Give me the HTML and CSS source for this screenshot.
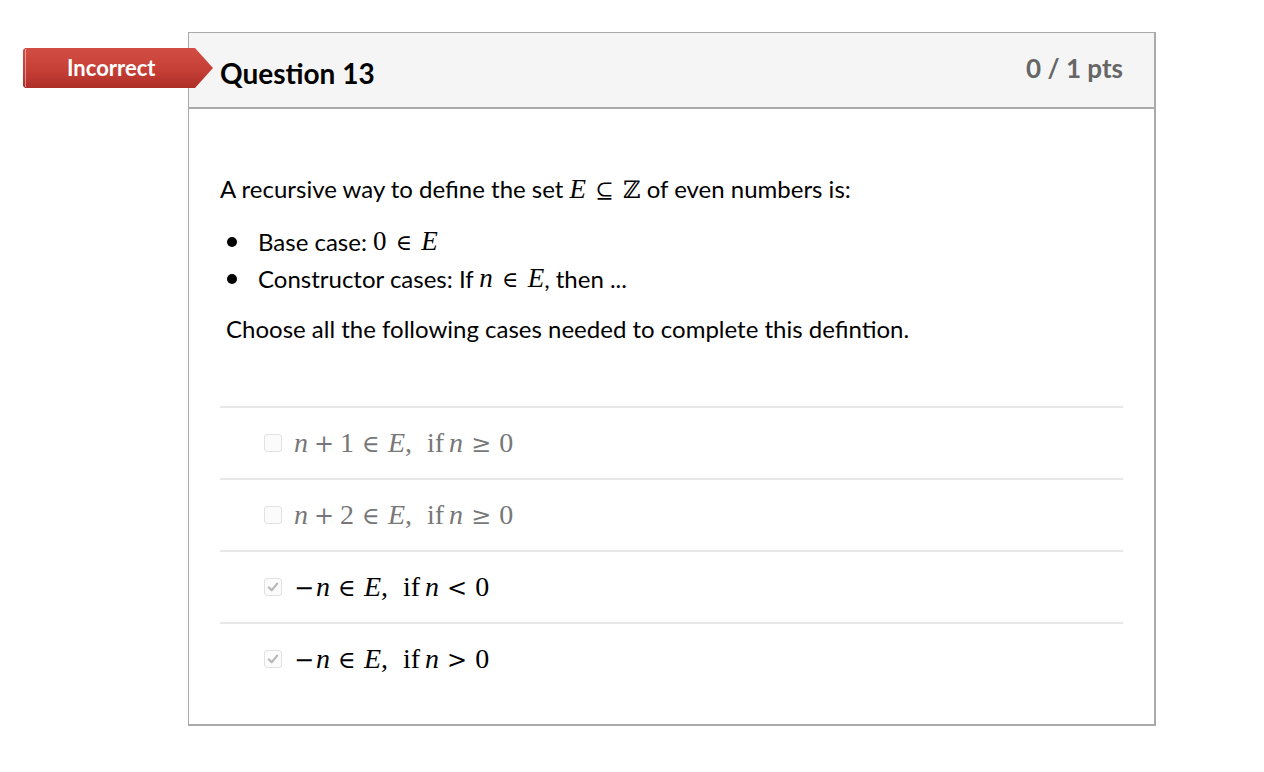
FILE: index.html
```html
<!DOCTYPE html>
<html>
<head>
<meta charset="utf-8">
<link rel="stylesheet" href="styles.css">
</head>
<body>
<div class="page">
  <div class="card">
    <div class="banner"><span class="banner-text">Incorrect</span></div>
    <div class="header">
      <h2 class="title">Question 13</h2>
      <div class="pts">0 / 1 pts</div>
    </div>
    <div class="body">
      <p class="intro">A recursive way to define the set <span class="m"><i>E</i><span class="rel">⊆</span><span class="bb">ℤ</span></span> of even numbers is:</p>
      <ul class="list">
        <li>Base case:&nbsp;<span class="m">0<span class="rel">∈</span><i>E</i></span></li>
        <li>Constructor cases: If&nbsp;<span class="m"><i>n</i><span class="rel">∈</span><i>E</i></span>, then ...</li>
      </ul>
      <p class="choose">Choose all the following cases needed to complete this defintion.</p>
      <div class="answers">
        <div class="answer dim">
          <span class="cb"></span>
          <span class="m ans"><i>n</i><span class="bin">+</span>1<span class="rel">∈</span><i>E</i>,<span class="sp"></span>if<span class="thin"></span><i>n</i><span class="rel">≥</span>0</span>
        </div>
        <div class="answer dim">
          <span class="cb"></span>
          <span class="m ans"><i>n</i><span class="bin">+</span>2<span class="rel">∈</span><i>E</i>,<span class="sp"></span>if<span class="thin"></span><i>n</i><span class="rel">≥</span>0</span>
        </div>
        <div class="answer">
          <span class="cb"><svg viewBox="0 0 16 16" width="16" height="16"><path d="M3.8 8.4 L6.7 11.2 L12.2 4.6" fill="none" stroke="#b8b8b8" stroke-width="2.2" stroke-linecap="round" stroke-linejoin="round"/></svg></span>
          <span class="m ans"><span class="minus">−</span><i>n</i><span class="rel">∈</span><i>E</i>,<span class="sp"></span>if<span class="thin"></span><i>n</i><span class="rel">&lt;</span>0</span>
        </div>
        <div class="answer">
          <span class="cb"><svg viewBox="0 0 16 16" width="16" height="16"><path d="M3.8 8.4 L6.7 11.2 L12.2 4.6" fill="none" stroke="#b8b8b8" stroke-width="2.2" stroke-linecap="round" stroke-linejoin="round"/></svg></span>
          <span class="m ans"><span class="minus">−</span><i>n</i><span class="rel">∈</span><i>E</i>,<span class="sp"></span>if<span class="thin"></span><i>n</i><span class="rel">&gt;</span>0</span>
        </div>
      </div>
    </div>
  </div>
</div>
</body>
</html>
```
FILE: styles.css
```css
* { box-sizing: border-box; }
html, body { margin: 0; padding: 0; background: #fff; }
body { font-family: Lato, "Open Sans", sans-serif; color: #000; }
.page { padding: 32px 0 0 188px; }
.card {
  position: relative;
  width: 968px;
  height: 694px;
  border: 2px solid #aaaaaa;
  border-top-width: 1px;
  border-left-width: 1px;
  background: #fff;
}
.banner {
  position: absolute;
  left: -166px;
  top: 15px;
  width: 190px;
  height: 40px;
  background: linear-gradient(#d24e44, #c63f36 55%, #ad2f28);
  clip-path: polygon(0 2px, 2px 0, 172px 0, 190px 20px, 172px 40px, 2px 40px, 0 38px);
  display: flex;
  align-items: center;
  padding-left: 44px;
}
.banner::before {
  content: "";
  position: absolute;
  left: 2px;
  top: 1px;
  bottom: 1px;
  width: 1px;
  background: rgba(255,255,255,0.45);
}
.banner-text {
  color: #fff;
  font-weight: 700;
  font-size: 22px;
  line-height: 26px;
  margin-top: -1px;
}
.header {
  height: 76px;
  background: #f5f5f5;
  border-bottom: 2px solid #aaaaaa;
  display: flex;
  justify-content: space-between;
  align-items: flex-start;
  padding: 0 31px;
}
.title {
  margin: 23px 0 0 0;
  font-size: 28px;
  font-weight: 700;
  color: #000;
  line-height: 34px;
}
.pts {
  margin-top: 19px;
  font-size: 26px;
  font-weight: 700;
  color: #666;
  line-height: 32px;
}
.body { padding: 65px 31px 0 31px; color: #000; }
.intro { margin: 0; font-size: 24px; line-height: 30px; height: 30px; }
.m { font-family: "Liberation Serif", "DejaVu Serif", serif; font-size: 27px; line-height: 1; }
.m i { font-style: italic; }
.rel { font-family: "DejaVu Serif", serif; font-size: 22px; margin: 0 0.42em; }
.bin { font-family: "DejaVu Serif", serif; font-size: 22px; margin: 0 0.3em; }
.bb { font-family: "DejaVu Serif", serif; font-size: 24px; }
.sp { display: inline-block; width: 15px; }
.thin { display: inline-block; width: 5px; }
.list { margin: 19px 0 0 0; padding: 0 0 0 7px; list-style: none; font-size: 24px; line-height: 37px; }
.list li { display: flex; align-items: center; height: 37px; }
.list li::before {
  content: "";
  width: 10px;
  height: 10px;
  border-radius: 50%;
  background: #000;
  margin-right: 21px;
  flex: none;
}
.choose { margin: 17px 0 0 6px; font-size: 24px; line-height: 30px; height: 30px; }
.answers { margin-top: 62px; }
.answer {
  height: 72px;
  border-top: 2px solid #e8e8e8;
  display: flex;
  align-items: center;
  padding-left: 44px;
  gap: 12px;
  color: #000;
}
.answer.dim .ans { color: #777; }
.cb {
  width: 18px;
  height: 18px;
  border: 1px solid #e2e2e2;
  border-radius: 3px;
  background: #fbfbfb;
  display: flex;
  align-items: center;
  justify-content: center;
  flex: none;
}
.ans { font-size: 28px; padding-top: 0; }
.ans .rel { font-size: 24px; margin: 0 8px; }
.ans .bin { font-size: 24px; margin: 0 6px; }
.ans .minus { font-family: "DejaVu Serif", serif; font-size: 24px; margin-right: 2px; }
```
